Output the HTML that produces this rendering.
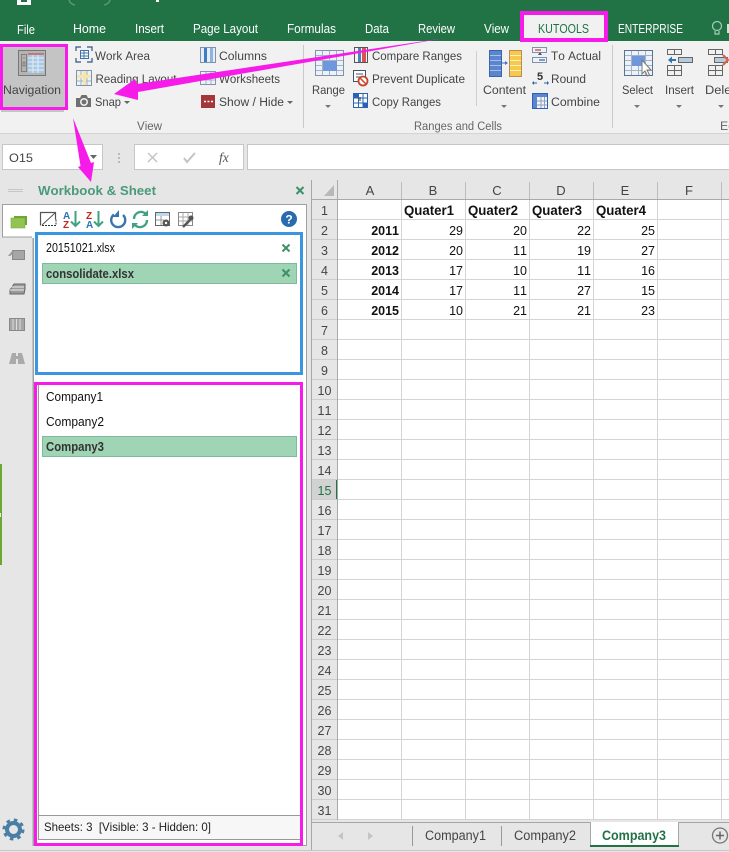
<!DOCTYPE html>
<html><head><meta charset="utf-8"><style>
html,body{margin:0;padding:0;width:729px;height:852px;overflow:hidden;background:#e6e6e6}
svg{display:block}
text{font-family:"Liberation Sans",sans-serif;font-size:12.3px;fill:#444;font-kerning:none}
.tab{fill:#fff;font-size:13px}
.r{text-anchor:middle;font-size:12.5px;fill:#444}
.c{text-anchor:middle;font-size:13px;fill:#444}
.n{text-anchor:end;font-size:12.5px;fill:#111}
.b{text-anchor:end;font-size:12.5px;font-weight:bold;fill:#111}
.q{font-size:13.5px;font-weight:bold;fill:#111}
.l{font-size:13px;fill:#111}
</style></head><body>
<svg width="729" height="852" viewBox="0 0 729 852" xmlns="http://www.w3.org/2000/svg">
<!-- title / tabs -->
<rect width="729" height="41" fill="#217346"/>
<path d="M17 0h14v5h-14z" fill="#fff"/><path d="M21 0h6v2h-6z" fill="#217346"/>
<path d="M69 0q1 4 6 5M110 0q-1 4-6 5" stroke="#5d9a78" stroke-width="1.4" fill="none"/>
<rect x="156" y="0" width="3" height="2" fill="#fff"/>
<text class="tab" x="17" y="34" textLength="18" lengthAdjust="spacingAndGlyphs">File</text>
<text class="tab" x="73" y="33" textLength="33" lengthAdjust="spacingAndGlyphs">Home</text>
<text class="tab" x="135" y="33" textLength="29" lengthAdjust="spacingAndGlyphs">Insert</text>
<text class="tab" x="193" y="33" textLength="65" lengthAdjust="spacingAndGlyphs">Page Layout</text>
<text class="tab" x="287" y="33" textLength="49" lengthAdjust="spacingAndGlyphs">Formulas</text>
<text class="tab" x="365" y="33" textLength="24" lengthAdjust="spacingAndGlyphs">Data</text>
<text class="tab" x="418" y="33" textLength="37" lengthAdjust="spacingAndGlyphs">Review</text>
<text class="tab" x="484" y="33" textLength="25" lengthAdjust="spacingAndGlyphs">View</text>
<text class="tab" x="618" y="33" textLength="65" lengthAdjust="spacingAndGlyphs">ENTERPRISE</text>
<g fill="none" stroke="#a6cdb6" stroke-width="1.2"><circle cx="717" cy="26" r="4.5"/><path d="M715 31v3h4v-3"/></g>
<rect x="727" y="24" width="2" height="9" fill="#cfe3d7"/>
<!-- ribbon -->
<rect y="41" width="729" height="92" fill="#f1f1f1"/>
<rect y="133" width="729" height="1" fill="#d4d4d4"/>
<rect x="522" y="13" width="84" height="28" fill="#f1f1f1"/>
<text x="538" y="33" textLength="51" lengthAdjust="spacingAndGlyphs" style="fill:#217346;font-size:13px">KUTOOLS</text>
<rect x="522" y="13" width="84" height="27" fill="none" stroke="#f61be9" stroke-width="4"/>
<!-- navigation -->
<rect x="1" y="46" width="63" height="66" fill="#c4c4c4"/>
<rect x="1.5" y="45.5" width="65" height="63" fill="#c4c4c4" stroke="#f61be9" stroke-width="3"/>
<rect x="18.5" y="50.5" width="27" height="25" fill="#b4b4b4" stroke="#777"/>
<rect x="28" y="54" width="16" height="19" fill="#a9c8e4"/>
<path d="M28 54h16" stroke="#c9635a" stroke-width="1.5"/>
<path d="M28 58h16M28 62h16M28 66h16M28 70h16M33 55v18M38 55v18" stroke="#e4eef7" stroke-width="1"/>
<rect x="21.5" y="54.5" width="5" height="17" fill="none" stroke="#808080"/>
<path d="M23 58h2M23 62h2v4h-2z" stroke="#808080" fill="none"/>
<text x="3" y="94" textLength="58" lengthAdjust="spacingAndGlyphs">Navigation</text>
<!-- view group icons -->
<path d="M76 51v-4h5M87 47h5v4M92 58v4h-5M81 62h-5v-4" stroke="#33567f" stroke-width="1.2" fill="none"/>
<rect x="80.5" y="50.5" width="8" height="8" fill="#fff" stroke="#3d74a8"/><path d="M80 53h8M80 56h8M84 51v8" stroke="#3d74a8"/>
<text x="95" y="60" textLength="55" lengthAdjust="spacingAndGlyphs">Work Area</text>
<rect x="76.5" y="70.5" width="15" height="15" fill="#eef2f7" stroke="#7f93ad"/>
<path d="M81 71v14M87 71v14M77 81h14" stroke="#9fb0c4"/>
<rect x="77" y="75" width="14" height="3" fill="#f7e6a8"/><rect x="83" y="71" width="3" height="14" fill="#f7e6a8"/>
<text x="95.5" y="83" textLength="81" lengthAdjust="spacingAndGlyphs">Reading Layout</text>
<path d="M76 98h4l1.500-3h5l1.500 3h3v9h-15z" fill="#6f6f6f"/><circle cx="84" cy="102" r="4" fill="#eee"/><circle cx="84" cy="102" r="2.400" fill="#6f6f6f"/>
<text x="95" y="106" textLength="26" lengthAdjust="spacingAndGlyphs">Snap</text>
<path d="M124 101h6l-3 3z" fill="#666"/>
<rect x="200.500" y="47.500" width="15" height="15" fill="#e9eef6" stroke="#7f93ad"/>
<rect x="204" y="48" width="3" height="14" fill="#3e7cc9"/><rect x="210" y="48" width="3" height="14" fill="#8fb3df"/>
<text x="219" y="60" textLength="48" lengthAdjust="spacingAndGlyphs">Columns</text>
<rect x="200.500" y="71.500" width="15" height="13" fill="#eef2f7" stroke="#7f93ad"/><path d="M201 76h14M201 80h14M206 72v12M211 72v12" stroke="#9fb0c4"/>
<text x="219" y="83" textLength="61" lengthAdjust="spacingAndGlyphs">Worksheets</text>
<rect x="201" y="95" width="14" height="13" fill="#a4373a"/><path d="M204 101.500h2M207.500 101.500h2M211 101.500h2" stroke="#fff" stroke-width="1.500"/>
<text x="219" y="106" textLength="65" lengthAdjust="spacingAndGlyphs">Show / Hide</text>
<path d="M287 101h6l-3 3z" fill="#666"/>
<text x="137" y="130" textLength="25" lengthAdjust="spacingAndGlyphs" style="fill:#666">View</text>
<rect x="303" y="45" width="1" height="83" fill="#c9c9c9"/>
<!-- range -->
<rect x="315.500" y="50.500" width="28" height="25" fill="#eef2f8" stroke="#7f93ad"/>
<path d="M316 55.500h27M316 60.500h27M316 65.500h27M316 70.500h27M322.500 51v24M329.500 51v24M336.500 51v24" stroke="#a3b3c7"/>
<rect x="323" y="61" width="14" height="10" fill="#6f97dc"/>
<text x="312" y="94" textLength="33" lengthAdjust="spacingAndGlyphs">Range</text>
<path d="M325 105h6l-3 3z" fill="#777"/>
<rect x="354.500" y="47.500" width="13" height="15" fill="#f5f5f5" stroke="#555"/><rect x="358" y="48" width="3" height="14" fill="#4f81bd"/><rect x="362" y="48" width="4" height="14" fill="#d9534f"/>
<text x="372" y="60" textLength="90" lengthAdjust="spacingAndGlyphs">Compare Ranges</text>
<rect x="353.500" y="70.500" width="12" height="11" fill="#fff" stroke="#44546a"/><path d="M356 74h7M356 77h5" stroke="#44546a"/>
<circle cx="363" cy="81" r="4.500" fill="#fff" stroke="#c8442c" stroke-width="1.800"/><path d="M360 78l6 6" stroke="#c8442c" stroke-width="1.500"/>
<text x="372" y="83" textLength="93" lengthAdjust="spacingAndGlyphs">Prevent Duplicate</text>
<rect x="353.500" y="93.500" width="14" height="14" fill="#fff" stroke="#2a62b5"/><path d="M354 98h13M354 103h13M358.500 94v13M363 94v13" stroke="#2a62b5"/><rect x="354" y="94" width="4" height="4" fill="#2a62b5"/><rect x="363" y="103" width="4" height="4" fill="#2a62b5"/><path d="M360 97v4" stroke="#333"/>
<text x="372" y="106" textLength="69" lengthAdjust="spacingAndGlyphs">Copy Ranges</text>
<rect x="476" y="51" width="1" height="55" fill="#d0d0d0"/>
<!-- content -->
<rect x="489.500" y="50.500" width="12" height="26" fill="#5b86cf" stroke="#3d64a8"/><path d="M490 55.500h11M490 60.500h11M490 65.500h11M490 70.500h11" stroke="#a8c0e8"/>
<path d="M502 63h5" stroke="#3d74c8"/><path d="M505 61l3 2-3 2z" fill="#3d74c8"/>
<rect x="509.500" y="50.500" width="12" height="26" fill="#f6c94a" stroke="#b98a5a"/><path d="M510 55.500h11M510 60.500h11M510 65.500h11M510 70.500h11" stroke="#fff0c0"/>
<text x="483" y="94" textLength="43" lengthAdjust="spacingAndGlyphs">Content</text>
<path d="M501 105h6l-3 3z" fill="#777"/>
<rect x="532.500" y="47.500" width="14" height="5" fill="#eef2f7" stroke="#7f93ad"/><path d="M535 50h6" stroke="#c0392b" stroke-width="1.200"/>
<rect x="532.500" y="57.500" width="14" height="5" fill="#eef2f7" stroke="#7f93ad"/><path d="M539 60h6" stroke="#2a62b5" stroke-width="1.200"/>
<path d="M540 52l-2 3h4zM537 55h6" fill="#44546a"/>
<text x="551" y="60" textLength="50" lengthAdjust="spacingAndGlyphs">To Actual</text>
<text x="537" y="80" style="font-size:11px;font-weight:bold;fill:#333">5</text>
<path d="M533 83h4M544 83h4" stroke="#2a62a5"/><path d="M532 83l2-2v4zM549 83l-2-2v4z" fill="#2a62a5"/>
<text x="551" y="83" textLength="35" lengthAdjust="spacingAndGlyphs">Round</text>
<rect x="532.500" y="93.500" width="15" height="15" fill="#f2f5fa" stroke="#2a62b5"/><rect x="533" y="94" width="4" height="14" fill="#5b86cf"/><rect x="533" y="94" width="14" height="3" fill="#5b86cf"/><path d="M537 101h10M537 105h10M541 97v11M544.500 97v11" stroke="#8aa0bd"/>
<text x="551" y="106" textLength="49" lengthAdjust="spacingAndGlyphs">Combine</text>
<text x="414" y="130" textLength="88" lengthAdjust="spacingAndGlyphs" style="fill:#666">Ranges and Cells</text>
<rect x="612" y="45" width="1" height="83" fill="#c9c9c9"/>
<!-- select -->
<rect x="624.500" y="50.500" width="28" height="25" fill="#eef2f8" stroke="#5a7391"/>
<path d="M625 55.500h27M625 60.500h27M625 65.500h27M625 70.500h27M631.500 51v24M638.500 51v24M645.500 51v24" stroke="#a3b3c7"/>
<rect x="632" y="56" width="13" height="10" fill="#6f97dc"/>
<path d="M642 60v14l3-3 2.500 5 2-1-2.500-5h4z" fill="#fff" stroke="#777"/>
<text x="622" y="94" textLength="31" lengthAdjust="spacingAndGlyphs">Select</text>
<path d="M634 105h6l-3 3z" fill="#777"/>
<g fill="none" stroke="#666"><path d="M667.500 49.500h14v5h-14zM674.500 49.500v5"/><path d="M667.500 65.500h14v10h-14zM667.500 70.500h14M674.500 65.500v10"/><rect x="678.500" y="57.500" width="14" height="5" fill="#b5cbe0"/></g>
<path d="M671 60h5" stroke="#2e75b6" stroke-width="2"/><path d="M672 56.500l-4 3.500 4 3.500z" fill="#2e75b6"/>
<text x="665" y="94" textLength="29" lengthAdjust="spacingAndGlyphs">Insert</text>
<path d="M676 105h6l-3 3z" fill="#777"/>
<g fill="none" stroke="#666"><path d="M708.500 49.500h14v5h-14zM715.500 49.500v5"/><path d="M708.500 65.500h14v10h-14zM708.500 70.500h14M715.500 65.500v10"/><rect x="714.500" y="57.500" width="13" height="5" fill="#b5cbe0"/></g>
<path d="M723 55l5 5-5 5" fill="none" stroke="#d9634a" stroke-width="2.200"/>
<text x="705" y="94" textLength="37" lengthAdjust="spacingAndGlyphs">Delete</text>
<path d="M718 105h6l-3 3z" fill="#777"/>
<text x="720" y="130" style="fill:#666">Ed</text>
<!-- formula bar -->
<rect x="2.500" y="144.500" width="100" height="25" fill="#fff" stroke="#c6c6c6"/>
<text x="9" y="162" textLength="24" lengthAdjust="spacingAndGlyphs" style="font-size:12px">O15</text>
<path d="M90 155h7l-3.500 4z" fill="#666"/>
<path d="M119 153v2M119 157v2M119 161v2" stroke="#aaa" stroke-width="1.500"/>
<rect x="134.500" y="144.500" width="109" height="25" fill="#fff" stroke="#c6c6c6"/>
<path d="M148 153l9 9M157 153l-9 9" stroke="#c4c4c4" stroke-width="1.500"/>
<path d="M184 158l3 4 8-9" stroke="#c4c4c4" stroke-width="2" fill="none"/>
<text x="219" y="162" style="font-family:'Liberation Serif',serif;font-style:italic;font-size:13.500px;fill:#555">fx</text>
<rect x="247.500" y="144.500" width="482" height="25" fill="#fff" stroke="#c6c6c6"/>
<!-- panel -->
<rect x="0" y="464" width="2" height="101" fill="#6aa82f"/>
<rect x="0" y="513" width="1" height="4" fill="#eee"/>
<path d="M8 189.500h15M8 191.500h15" stroke="#c6c6c6"/>
<text x="38" y="195" textLength="118" lengthAdjust="spacingAndGlyphs" style="font-weight:bold;fill:#4a9a7a;font-size:13px">Workbook &amp; Sheet</text>
<path d="M296.500 187l7 7M303.500 187l-7 7" stroke="#3f8f6a" stroke-width="2"/>
<rect x="311" y="180" width="1" height="670" fill="#a6a6a6"/>
<rect x="33" y="204.500" width="273.500" height="641" fill="#fff" stroke="#a0a0a0"/>
<path d="M33 237V204.500H2.500V237H33" fill="#fff" stroke="#a0a0a0"/>
<rect x="33" y="205" width="273" height="27" fill="#fff"/>
<rect x="32" y="205" width="3" height="33" fill="#fff"/>
<rect x="33" y="238" width="1" height="608" fill="#a0a0a0"/>
<rect x="306" y="204" width="1" height="642" fill="#a0a0a0"/>
<!-- side icons -->
<rect x="14" y="216" width="13" height="9" fill="#6aa82f"/><rect x="11" y="218" width="14" height="10" fill="#92c353" stroke="#7ab03a" stroke-width=".6"/>
<rect x="12.500" y="250.500" width="12" height="9" fill="#a6a6a6" stroke="#888"/><path d="M8 256l5-6 1 3-4 3z" fill="#999"/>
<path d="M10 290l4-6h11v5l-1 5H10z" fill="#9a9a9a" stroke="#666"/><path d="M10 290h14M11 287h13" stroke="#eee"/>
<rect x="9.500" y="318.500" width="15" height="12" fill="#a6a6a6" stroke="#888"/><path d="M13 319v11M16.500 319v11M20 319v11" stroke="#ddd"/>
<path d="M9 364l3-11h4v11zM18 364v-11h4l3 11zM15 356h4v3h-4z" fill="#aaa"/>
<!-- toolbar -->
<path d="M40.500 225.500v-13h15v7" fill="none" stroke="#555" stroke-width="1.200"/><path d="M42 225.500h14v-6" fill="none" stroke="#333" stroke-dasharray="2 1"/><path d="M42 225l13-12" stroke="#555"/>
<text x="63" y="219" style="font-size:10px;font-weight:bold;fill:#2d74b5">A</text><text x="63" y="228" style="font-size:10px;font-weight:bold;fill:#c0281c">Z</text>
<path d="M75.500 211v15M71 221.500l4.500 4.500 4.500-4.500" fill="none" stroke="#3fa37d" stroke-width="2"/>
<text x="86" y="219" style="font-size:10px;font-weight:bold;fill:#c0281c">Z</text><text x="86" y="228" style="font-size:10px;font-weight:bold;fill:#2d74b5">A</text>
<path d="M98.500 211v15M94 221.500l4.500 4.500 4.500-4.500" fill="none" stroke="#3fa37d" stroke-width="2"/>
<path d="M114 214.500a7 7 0 1 0 9 .5" fill="none" stroke="#3a74b0" stroke-width="2.400"/><path d="M119 210v7h-6z" fill="#3a74b0"/>
<path d="M134 219a7 7 0 0 1 12-5M147 220a7 7 0 0 1-12 5" fill="none" stroke="#3fa37d" stroke-width="2.400"/><path d="M148 210v6h-6zM132 229v-6h6z" fill="#3fa37d"/>
<rect x="155.500" y="212.500" width="14" height="13" fill="#fff" stroke="#666"/><rect x="156" y="213" width="13" height="3" fill="#bcd7ee"/><path d="M156 220h8M161 216v9" stroke="#999"/><circle cx="166" cy="223" r="3.500" fill="#555"/><circle cx="166" cy="223" r="1.200" fill="#fff"/>
<rect x="178.500" y="212.500" width="14" height="13" fill="#fff" stroke="#888"/><path d="M179 217h13M179 221h13M183 213v12M188 213v12" stroke="#aaa"/><path d="M183 227l7-7" stroke="#555" stroke-width="2.400"/><circle cx="191" cy="218" r="2.500" fill="#555"/>
<circle cx="289" cy="219" r="8" fill="#2a6bb0"/><text x="289" y="223.500" text-anchor="middle" style="font-size:12px;font-weight:bold;fill:#fff">?</text>
<!-- blue box -->
<rect x="36.500" y="233.500" width="265" height="140" fill="#fff" stroke="#3a96e0" stroke-width="3"/>
<text class="l" x="46" y="252" textLength="69" lengthAdjust="spacingAndGlyphs">20151021.xlsx</text>
<path d="M282.500 244.500l7 7M289.500 244.500l-7 7" stroke="#3f8f6a" stroke-width="2"/>
<rect x="42.500" y="263.500" width="254" height="20" fill="#9fd4b4" stroke="#7fbb9a"/>
<text class="l" x="46" y="278" textLength="88" lengthAdjust="spacingAndGlyphs" style="font-weight:bold;fill:#333">consolidate.xlsx</text>
<path d="M282.500 269.500l7 7M289.500 269.500l-7 7" stroke="#3f8f6a" stroke-width="2"/>
<!-- pink box -->
<rect x="38.500" y="385" width="262" height="430" fill="#fff"/>
<rect x="38.500" y="815.500" width="262" height="24" fill="#f7f7f7" stroke="#999"/>
<rect x="38" y="385" width="1" height="431" fill="#999"/>
<rect x="35.500" y="383.500" width="266" height="461" fill="none" stroke="#f61be9" stroke-width="3"/>
<text class="l" x="46" y="401" textLength="57" lengthAdjust="spacingAndGlyphs">Company1</text>
<text class="l" x="46" y="426" textLength="58" lengthAdjust="spacingAndGlyphs">Company2</text>
<rect x="42.500" y="436.500" width="254" height="20" fill="#9fd4b4" stroke="#7fbb9a"/>
<text class="l" x="46" y="451" textLength="58" lengthAdjust="spacingAndGlyphs" style="font-weight:bold;fill:#333">Company3</text>
<text x="44" y="831" textLength="167" lengthAdjust="spacingAndGlyphs" style="font-size:12px;fill:#222" xml:space="preserve">Sheets: 3  [Visible: 3 - Hidden: 0]</text>
<!-- gear -->
<circle cx="13.500" cy="829.500" r="6.500" fill="none" stroke="#4a7ea5" stroke-width="4"/>
<circle cx="13.500" cy="829.500" r="9.500" fill="none" stroke="#4a7ea5" stroke-width="3" stroke-dasharray="3.500 3.960"/>
<!-- grid -->
<rect x="312" y="180" width="417" height="640" fill="#fff"/>
<rect x="312" y="180" width="417" height="19" fill="#e6e6e6"/>
<rect x="312" y="199" width="26" height="621" fill="#e6e6e6"/>
<rect x="312" y="479" width="26" height="20" fill="#d2d2d2"/>
<rect x="336" y="479" width="2" height="20" fill="#217346"/>
<path d="M334 185v11h-10z" fill="#b8b8b8"/>
<path d="M338 219.500h391M338 239.500h391M338 259.500h391M338 279.500h391M338 299.500h391M338 319.500h391M338 339.500h391M338 359.500h391M338 379.500h391M338 399.500h391M338 419.500h391M338 439.500h391M338 459.500h391M338 479.500h391M338 499.500h391M338 519.500h391M338 539.500h391M338 559.500h391M338 579.500h391M338 599.500h391M338 619.500h391M338 639.500h391M338 659.500h391M338 679.500h391M338 699.500h391M338 719.500h391M338 739.500h391M338 759.500h391M338 779.500h391M338 799.500h391M338 819.500h391M401.500 199v621M465.500 199v621M529.500 199v621M593.500 199v621M657.500 199v621M721.500 199v621" stroke="#d4d4d4" fill="none"/>
<path d="M312 219.500h25M312 239.500h25M312 259.500h25M312 279.500h25M312 299.500h25M312 319.500h25M312 339.500h25M312 359.500h25M312 379.500h25M312 399.500h25M312 419.500h25M312 439.500h25M312 459.500h25M312 479.500h25M312 499.500h25M312 519.500h25M312 539.500h25M312 559.500h25M312 579.500h25M312 599.500h25M312 619.500h25M312 639.500h25M312 659.500h25M312 679.500h25M312 699.500h25M312 719.500h25M312 739.500h25M312 759.500h25M312 779.500h25M312 799.500h25M312 819.500h25" stroke="#cdcdcd"/>
<path d="M401.500 182v17M465.500 182v17M529.500 182v17M593.500 182v17M657.500 182v17M721.500 182v17" stroke="#bdbdbd"/>
<path d="M312 199.500h417M337.500 180v640" stroke="#a9a9a9"/>
<text class="c" x="370" y="195">A</text><text class="c" x="433" y="195">B</text><text class="c" x="497" y="195">C</text><text class="c" x="561" y="195">D</text><text class="c" x="625" y="195">E</text><text class="c" x="689" y="195">F</text>
<text class="r" x="324.500" y="215">1</text><text class="r" x="324.500" y="235">2</text><text class="r" x="324.500" y="255">3</text><text class="r" x="324.500" y="275">4</text><text class="r" x="324.500" y="295">5</text><text class="r" x="324.500" y="315">6</text><text class="r" x="324.500" y="335">7</text><text class="r" x="324.500" y="355">8</text><text class="r" x="324.500" y="375">9</text><text class="r" x="324.500" y="395">10</text><text class="r" x="324.500" y="415">11</text><text class="r" x="324.500" y="435">12</text><text class="r" x="324.500" y="455">13</text><text class="r" x="324.500" y="475">14</text><text class="r" x="324.500" y="495" style="fill:#217346">15</text><text class="r" x="324.500" y="515">16</text><text class="r" x="324.500" y="535">17</text><text class="r" x="324.500" y="555">18</text><text class="r" x="324.500" y="575">19</text><text class="r" x="324.500" y="595">20</text><text class="r" x="324.500" y="615">21</text><text class="r" x="324.500" y="635">22</text><text class="r" x="324.500" y="655">23</text><text class="r" x="324.500" y="675">24</text><text class="r" x="324.500" y="695">25</text><text class="r" x="324.500" y="715">26</text><text class="r" x="324.500" y="735">27</text><text class="r" x="324.500" y="755">28</text><text class="r" x="324.500" y="775">29</text><text class="r" x="324.500" y="795">30</text><text class="r" x="324.500" y="815">31</text>
<text class="q" x="404" y="215" textLength="50" lengthAdjust="spacingAndGlyphs">Quater1</text><text class="q" x="468" y="215" textLength="50" lengthAdjust="spacingAndGlyphs">Quater2</text><text class="q" x="532" y="215" textLength="50" lengthAdjust="spacingAndGlyphs">Quater3</text><text class="q" x="596" y="215" textLength="50" lengthAdjust="spacingAndGlyphs">Quater4</text>
<text class="b" x="399" y="235">2011</text><text class="n" x="463" y="235">29</text><text class="n" x="527" y="235">20</text><text class="n" x="591" y="235">22</text><text class="n" x="655" y="235">25</text>
<text class="b" x="399" y="255">2012</text><text class="n" x="463" y="255">20</text><text class="n" x="527" y="255">11</text><text class="n" x="591" y="255">19</text><text class="n" x="655" y="255">27</text>
<text class="b" x="399" y="275">2013</text><text class="n" x="463" y="275">17</text><text class="n" x="527" y="275">10</text><text class="n" x="591" y="275">11</text><text class="n" x="655" y="275">16</text>
<text class="b" x="399" y="295">2014</text><text class="n" x="463" y="295">17</text><text class="n" x="527" y="295">11</text><text class="n" x="591" y="295">27</text><text class="n" x="655" y="295">15</text>
<text class="b" x="399" y="315">2015</text><text class="n" x="463" y="315">10</text><text class="n" x="527" y="315">21</text><text class="n" x="591" y="315">21</text><text class="n" x="655" y="315">23</text>
<!-- sheet tabs -->
<rect x="312" y="820" width="417" height="29" fill="#e6e6e6"/>
<path d="M312 822.500h417" stroke="#a6a6a6"/>
<path d="M343 832v8l-5-4z" fill="#c4c4c4"/><path d="M368 832v8l5-4z" fill="#c4c4c4"/>
<path d="M412.500 826v20M501.500 826v20" stroke="#999"/>
<text x="425" y="840" textLength="61" lengthAdjust="spacingAndGlyphs" style="fill:#444;font-size:13.500px">Company1</text>
<text x="514" y="840" textLength="62" lengthAdjust="spacingAndGlyphs" style="fill:#444;font-size:13.500px">Company2</text>
<path d="M590.500 846V822.500H678.500V846" fill="#fff" stroke="#a6a6a6"/>
<rect x="591" y="822" width="87" height="2" fill="#fff"/>
<rect x="590" y="845" width="89" height="2" fill="#217346"/>
<text x="602" y="840" textLength="64" lengthAdjust="spacingAndGlyphs" style="font-weight:bold;fill:#217346;font-size:13.500px">Company3</text>
<circle cx="720" cy="835.500" r="7.500" fill="none" stroke="#777" stroke-width="1.300"/><path d="M716 835.500h8M720 831.500v8" stroke="#666" stroke-width="1.500"/>
<rect y="850" width="729" height="1" fill="#c6c6c6"/>
<!-- arrows -->
<polygon points="114,94 135,79 137,84 445,38 138,92 138,100" fill="#f61be9"/>
<polygon points="73,118 91,163 94,162 91,182 78,167 80.500,166" fill="#f61be9"/>
</svg>
</body></html>
